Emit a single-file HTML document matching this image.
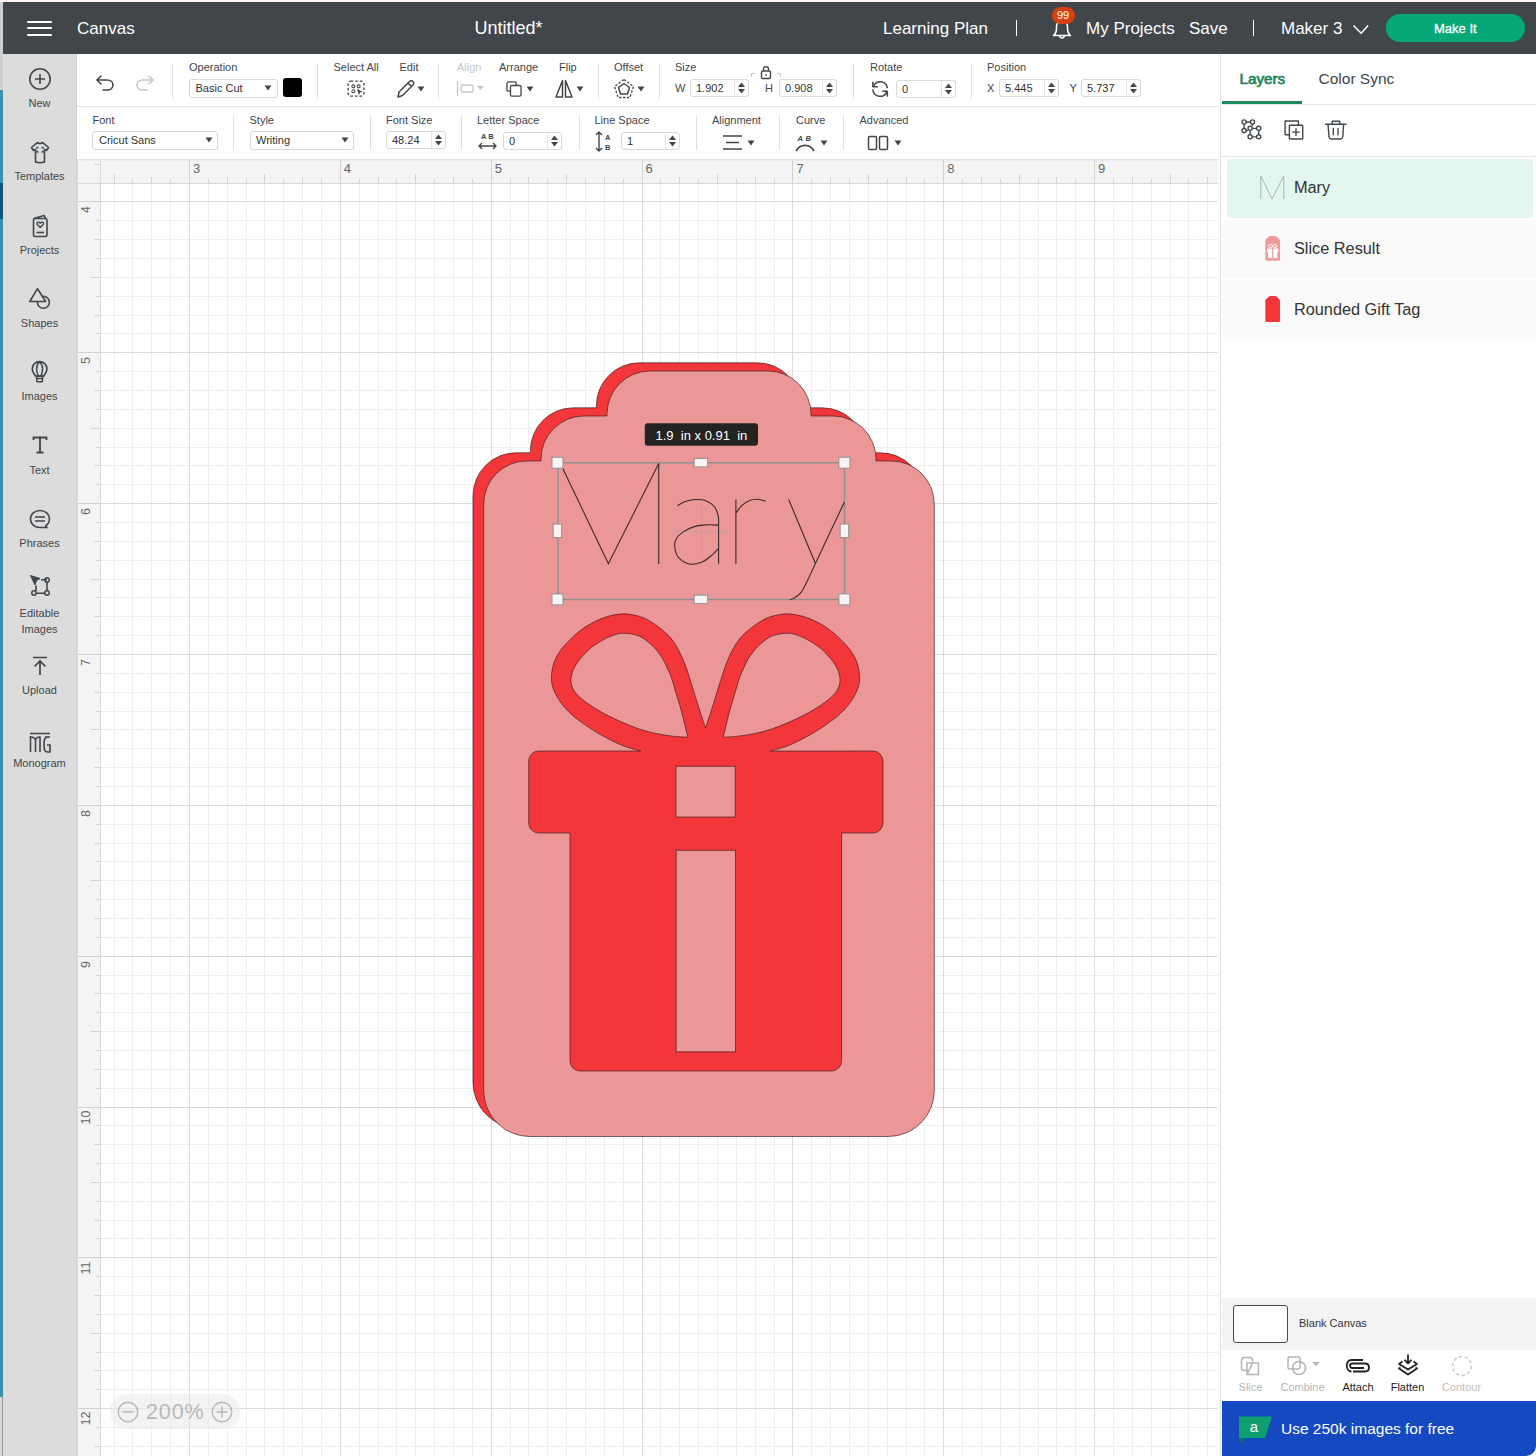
<!DOCTYPE html><html><head><meta charset="utf-8"><style>
html,body{margin:0;padding:0;width:1536px;height:1456px;overflow:hidden;background:#fff;font-family:"Liberation Sans", sans-serif;}
.t{position:absolute;white-space:nowrap;}
.r{position:absolute;display:block;}
</style></head><body>
<div class="r" style="left:0px;top:0px;width:1536px;height:1456px;background:#ffffff"></div>
<div class="r" style="left:0px;top:0px;width:3px;height:1456px;background:#3d8fae"></div>
<div class="r" style="left:0px;top:0px;width:3px;height:90px;background:#cfcfcf"></div>
<div class="r" style="left:0px;top:183px;width:3px;height:36px;background:#0f5273"></div>
<div class="r" style="left:0px;top:1397px;width:3px;height:59px;background:#d8d8d8"></div>
<div class="r" style="left:2px;top:1397px;width:1px;height:59px;background:#9a9a9a"></div>
<div class="r" style="left:0px;top:0px;width:1536px;height:2px;background:#fbf1f1"></div>
<div class="r" style="left:3px;top:2px;width:1533px;height:52px;background:#41464b"></div>
<div class="r" style="left:27px;top:21px;width:25px;height:2px;background:#fff;border-radius:1px"></div>
<div class="r" style="left:27px;top:27px;width:25px;height:2px;background:#fff;border-radius:1px"></div>
<div class="r" style="left:27px;top:34px;width:25px;height:2px;background:#fff;border-radius:1px"></div>
<div class="t" style="left:77.00px;top:19.61px;font-size:17px;line-height:17px;color:#fff;font-weight:normal;">Canvas</div>
<div class="t" style="left:208.50px;width:600px;text-align:center;top:19.06px;font-size:18px;line-height:18px;color:#fff;font-weight:normal;">Untitled*</div>
<div class="t" style="left:883.00px;top:19.61px;font-size:17px;line-height:17px;color:#fff;font-weight:normal;">Learning Plan</div>
<div class="r" style="left:1015.5px;top:20px;width:1.4px;height:16px;background:#fff"></div>
<svg class="r" style="left:1049px;top:14px;" width="26" height="26" viewBox="0 0 26 26"><path d="M4.5 21.5 C6.5 20 7.5 18 7.5 15 V12.5 C7.5 9 10 6.5 13 6.5 C16 6.5 18.5 9 18.5 12.5 V15 C18.5 18 19.5 20 21.5 21.5 Z" fill="none" stroke="#fff" stroke-width="1.5" stroke-linejoin="round"/><path d="M10.8 22 C11 24.5 15 24.5 15.2 22" fill="none" stroke="#fff" stroke-width="1.5"/></svg>
<div class="r" style="left:1052px;top:7px;width:22.5px;height:16.5px;background:#d9400f;border-radius:8.5px"></div>
<div class="t" style="left:763.00px;width:600px;text-align:center;top:9.69px;font-size:11px;line-height:11px;color:#fff;font-weight:normal;">99</div>
<div class="t" style="left:1086.00px;top:19.61px;font-size:17px;line-height:17px;color:#fff;font-weight:normal;">My Projects</div>
<div class="t" style="left:1189.00px;top:19.61px;font-size:17px;line-height:17px;color:#fff;font-weight:normal;">Save</div>
<div class="r" style="left:1253px;top:20px;width:1.4px;height:16px;background:#fff"></div>
<div class="t" style="left:1281.00px;top:19.61px;font-size:17px;line-height:17px;color:#fff;font-weight:normal;">Maker 3</div>
<svg class="r" style="left:1350px;top:20px;" width="22" height="18" viewBox="0 0 22 18"><path d="M3.5 5.5 L11.1 13.2 L18.1 5.5" fill="none" stroke="#fff" stroke-width="1.5"/></svg>
<div class="r" style="left:1386px;top:14px;width:139px;height:28px;background:#06a878;border-radius:14px"></div>
<div class="t" style="left:1155.30px;width:600px;text-align:center;top:21.80px;font-size:13px;line-height:13px;color:#fff;font-weight:normal;-webkit-text-stroke:0.3px #fff;">Make It</div>
<div class="r" style="left:3px;top:54px;width:73px;height:1402px;background:#dcdcdc"></div>
<div class="r" style="left:76px;top:54px;width:1px;height:1402px;background:#d2d2d2"></div>
<svg class="r" style="left:25px;top:64px;" width="30" height="30" viewBox="0 0 30 30"><circle cx="15" cy="15" r="10.2" fill="none" stroke="#41464b" stroke-width="1.6"/><path d="M15 10 V20 M10 15 H20" stroke="#41464b" stroke-width="1.6"/></svg>
<div class="t" style="left:-260.50px;width:600px;text-align:center;top:97.69px;font-size:11px;line-height:11px;color:#41464b;font-weight:normal;">New</div>
<svg class="r" style="left:25px;top:137px;" width="30" height="30" viewBox="0 0 30 30"><path d="M10.5 7 L13 5.5 C14 7 16 7 17 5.5 L19.5 7 L23.5 10.5 L21.5 13.5 L19.5 12.5 L19.5 25 C16.5 26 13.5 26 10.5 25 L10.5 12.5 L8.5 13.5 L6.5 10.5 Z" fill="none" stroke="#41464b" stroke-width="1.6" stroke-linejoin="round"/><path d="M12 12 V10.4 H13.4 M16.6 10.4 H18 V12 M12 13.4 V15 H13.4 M16.6 15 H18 V13.4" fill="none" stroke="#41464b" stroke-width="1.3"/></svg>
<div class="t" style="left:-260.50px;width:600px;text-align:center;top:170.69px;font-size:11px;line-height:11px;color:#41464b;font-weight:normal;">Templates</div>
<svg class="r" style="left:25px;top:211px;" width="30" height="30" viewBox="0 0 30 30"><rect x="8.5" y="7.5" width="13.5" height="18" rx="1.5" fill="none" stroke="#41464b" stroke-width="1.6"/><path d="M9 7.5 L19 4.5 L20.5 7" fill="none" stroke="#41464b" stroke-width="1.6" stroke-linejoin="round"/><path d="M15.2 16.5 L12.3 13.6 C11.3 12.4 12.3 10.8 13.6 11.2 L15.2 12.2 L16.8 11.2 C18.1 10.8 19.1 12.4 18.1 13.6 Z" fill="none" stroke="#41464b" stroke-width="1.4" stroke-linejoin="round"/><path d="M11.5 21.5 H19" stroke="#41464b" stroke-width="1.6"/></svg>
<div class="t" style="left:-260.50px;width:600px;text-align:center;top:244.69px;font-size:11px;line-height:11px;color:#41464b;font-weight:normal;">Projects</div>
<svg class="r" style="left:25px;top:284px;" width="30" height="30" viewBox="0 0 30 30"><circle cx="18.4" cy="18.3" r="6" fill="none" stroke="#41464b" stroke-width="1.6"/><path d="M12.5 4.7 L4.8 17.5 H20.7 Z" fill="#dcdcdc" stroke="#41464b" stroke-width="1.6" stroke-linejoin="round"/></svg>
<div class="t" style="left:-260.50px;width:600px;text-align:center;top:317.69px;font-size:11px;line-height:11px;color:#41464b;font-weight:normal;">Shapes</div>
<svg class="r" style="left:25px;top:357px;" width="30" height="30" viewBox="0 0 30 30"><path d="M10.5 19 L8.3 15.5 C7.6 14.3 7.3 13 7.3 11.8 C7.3 7.7 10.6 4.6 14.6 4.6 C18.6 4.6 21.9 7.7 21.9 11.8 C21.9 13 21.6 14.3 20.9 15.5 L18.7 19 Z" fill="none" stroke="#41464b" stroke-width="1.6" stroke-linejoin="round"/><path d="M14.6 4.8 C12.2 7 11.6 10 11.6 12 C11.6 14.5 12.5 17 13.2 19 M14.6 4.8 C17 7 17.6 10 17.6 12 C17.6 14.5 16.7 17 16 19" fill="none" stroke="#41464b" stroke-width="1.5"/><path d="M11.5 19 H17.7 L17.3 24.8 H11.9 Z M12 21.5 H17.2" fill="none" stroke="#41464b" stroke-width="1.5" stroke-linejoin="round"/></svg>
<div class="t" style="left:-260.50px;width:600px;text-align:center;top:390.69px;font-size:11px;line-height:11px;color:#41464b;font-weight:normal;">Images</div>
<svg class="r" style="left:25px;top:431px;" width="30" height="30" viewBox="0 0 30 30"><path d="M8.5 9 V6.5 H21.5 V9 M15 6.5 V21.5 M11.5 21.5 H18.5" fill="none" stroke="#41464b" stroke-width="1.8"/></svg>
<div class="t" style="left:-260.50px;width:600px;text-align:center;top:464.69px;font-size:11px;line-height:11px;color:#41464b;font-weight:normal;">Text</div>
<svg class="r" style="left:25px;top:504px;" width="30" height="30" viewBox="0 0 30 30"><path d="M22 23.5 L20.6 21.8 C23 20.3 24.5 18 24.5 15 C24.5 10 20.3 6.5 15 6.5 C9.7 6.5 5.5 10 5.5 15 C5.5 20 9.7 23.5 15 23.5 Z" fill="none" stroke="#41464b" stroke-width="1.6" stroke-linejoin="round"/><path d="M10 13 H20 M10 17 H20" stroke="#41464b" stroke-width="1.6"/></svg>
<div class="t" style="left:-260.50px;width:600px;text-align:center;top:537.69px;font-size:11px;line-height:11px;color:#41464b;font-weight:normal;">Phrases</div>
<svg class="r" style="left:25px;top:724px;" width="30" height="30" viewBox="0 0 30 30"><path transform="translate(0,4)" d="M5 5.5 H25 M5.5 8 V24 M5.5 9 C9 9 10.5 10 10.5 13 V24 M10.5 13 C10.5 10 12 9 15 9 V24 M20 9 H25 M24 9 C19.5 9 19 11 19 16.5 C19 22 19.5 24 23 24 L25 24 V17 H22" fill="none" stroke="#41464b" stroke-width="1.6"/></svg>
<div class="t" style="left:-260.50px;width:600px;text-align:center;top:757.69px;font-size:11px;line-height:11px;color:#41464b;font-weight:normal;">Monogram</div>
<svg class="r" style="left:25px;top:651px;" width="30" height="30" viewBox="0 0 30 30"><path d="M8 6.5 H22 M15 10 V24 M9.5 15.5 L15 10 L20.5 15.5" fill="none" stroke="#41464b" stroke-width="1.7"/></svg>
<div class="t" style="left:-260.50px;width:600px;text-align:center;top:684.69px;font-size:11px;line-height:11px;color:#41464b;font-weight:normal;">Upload</div>
<svg class="r" style="left:25px;top:571px;" width="30" height="30" viewBox="0 0 30 30"><path d="M5.5 4.5 L15 7.5 L11.5 9.5 L10 14 Z" fill="#41464b" stroke="#41464b" stroke-width="1" stroke-linejoin="round"/><path d="M11 14.5 V20 M11 22.2 H20 M22 20 V11 M22 8.8 H16" fill="none" stroke="#41464b" stroke-width="1.6"/><circle cx="9" cy="22" r="2.2" fill="none" stroke="#41464b" stroke-width="1.5"/><circle cx="22" cy="22" r="2.2" fill="none" stroke="#41464b" stroke-width="1.5"/><circle cx="22" cy="9" r="2.2" fill="none" stroke="#41464b" stroke-width="1.5"/></svg>
<div class="t" style="left:-260.50px;width:600px;text-align:center;top:607.69px;font-size:11px;line-height:11px;color:#41464b;font-weight:normal;">Editable</div>
<div class="t" style="left:-260.50px;width:600px;text-align:center;top:623.69px;font-size:11px;line-height:11px;color:#41464b;font-weight:normal;">Images</div>
<svg class="r" style="left:77px;top:160px;" width="1141" height="1296" viewBox="0 0 1141 1296"><rect x="37" y="0" width="1" height="1296" fill="#eeeeee"/><rect x="55" y="0" width="1" height="1296" fill="#eeeeee"/><rect x="74" y="0" width="1" height="1296" fill="#eeeeee"/><rect x="93" y="0" width="1" height="1296" fill="#eeeeee"/><rect x="131" y="0" width="1" height="1296" fill="#eeeeee"/><rect x="150" y="0" width="1" height="1296" fill="#eeeeee"/><rect x="169" y="0" width="1" height="1296" fill="#eeeeee"/><rect x="187" y="0" width="1" height="1296" fill="#eeeeee"/><rect x="206" y="0" width="1" height="1296" fill="#eeeeee"/><rect x="225" y="0" width="1" height="1296" fill="#eeeeee"/><rect x="244" y="0" width="1" height="1296" fill="#eeeeee"/><rect x="282" y="0" width="1" height="1296" fill="#eeeeee"/><rect x="301" y="0" width="1" height="1296" fill="#eeeeee"/><rect x="319" y="0" width="1" height="1296" fill="#eeeeee"/><rect x="338" y="0" width="1" height="1296" fill="#eeeeee"/><rect x="357" y="0" width="1" height="1296" fill="#eeeeee"/><rect x="376" y="0" width="1" height="1296" fill="#eeeeee"/><rect x="395" y="0" width="1" height="1296" fill="#eeeeee"/><rect x="433" y="0" width="1" height="1296" fill="#eeeeee"/><rect x="451" y="0" width="1" height="1296" fill="#eeeeee"/><rect x="470" y="0" width="1" height="1296" fill="#eeeeee"/><rect x="489" y="0" width="1" height="1296" fill="#eeeeee"/><rect x="508" y="0" width="1" height="1296" fill="#eeeeee"/><rect x="527" y="0" width="1" height="1296" fill="#eeeeee"/><rect x="546" y="0" width="1" height="1296" fill="#eeeeee"/><rect x="583" y="0" width="1" height="1296" fill="#eeeeee"/><rect x="602" y="0" width="1" height="1296" fill="#eeeeee"/><rect x="621" y="0" width="1" height="1296" fill="#eeeeee"/><rect x="640" y="0" width="1" height="1296" fill="#eeeeee"/><rect x="659" y="0" width="1" height="1296" fill="#eeeeee"/><rect x="678" y="0" width="1" height="1296" fill="#eeeeee"/><rect x="697" y="0" width="1" height="1296" fill="#eeeeee"/><rect x="734" y="0" width="1" height="1296" fill="#eeeeee"/><rect x="753" y="0" width="1" height="1296" fill="#eeeeee"/><rect x="772" y="0" width="1" height="1296" fill="#eeeeee"/><rect x="791" y="0" width="1" height="1296" fill="#eeeeee"/><rect x="810" y="0" width="1" height="1296" fill="#eeeeee"/><rect x="829" y="0" width="1" height="1296" fill="#eeeeee"/><rect x="847" y="0" width="1" height="1296" fill="#eeeeee"/><rect x="885" y="0" width="1" height="1296" fill="#eeeeee"/><rect x="904" y="0" width="1" height="1296" fill="#eeeeee"/><rect x="923" y="0" width="1" height="1296" fill="#eeeeee"/><rect x="942" y="0" width="1" height="1296" fill="#eeeeee"/><rect x="961" y="0" width="1" height="1296" fill="#eeeeee"/><rect x="979" y="0" width="1" height="1296" fill="#eeeeee"/><rect x="998" y="0" width="1" height="1296" fill="#eeeeee"/><rect x="1036" y="0" width="1" height="1296" fill="#eeeeee"/><rect x="1055" y="0" width="1" height="1296" fill="#eeeeee"/><rect x="1074" y="0" width="1" height="1296" fill="#eeeeee"/><rect x="1093" y="0" width="1" height="1296" fill="#eeeeee"/><rect x="1111" y="0" width="1" height="1296" fill="#eeeeee"/><rect x="1130" y="0" width="1" height="1296" fill="#eeeeee"/><rect x="0" y="60" width="1141" height="1" fill="#eeeeee"/><rect x="0" y="79" width="1141" height="1" fill="#eeeeee"/><rect x="0" y="98" width="1141" height="1" fill="#eeeeee"/><rect x="0" y="117" width="1141" height="1" fill="#eeeeee"/><rect x="0" y="136" width="1141" height="1" fill="#eeeeee"/><rect x="0" y="155" width="1141" height="1" fill="#eeeeee"/><rect x="0" y="173" width="1141" height="1" fill="#eeeeee"/><rect x="0" y="211" width="1141" height="1" fill="#eeeeee"/><rect x="0" y="230" width="1141" height="1" fill="#eeeeee"/><rect x="0" y="249" width="1141" height="1" fill="#eeeeee"/><rect x="0" y="268" width="1141" height="1" fill="#eeeeee"/><rect x="0" y="287" width="1141" height="1" fill="#eeeeee"/><rect x="0" y="305" width="1141" height="1" fill="#eeeeee"/><rect x="0" y="324" width="1141" height="1" fill="#eeeeee"/><rect x="0" y="362" width="1141" height="1" fill="#eeeeee"/><rect x="0" y="381" width="1141" height="1" fill="#eeeeee"/><rect x="0" y="400" width="1141" height="1" fill="#eeeeee"/><rect x="0" y="419" width="1141" height="1" fill="#eeeeee"/><rect x="0" y="437" width="1141" height="1" fill="#eeeeee"/><rect x="0" y="456" width="1141" height="1" fill="#eeeeee"/><rect x="0" y="475" width="1141" height="1" fill="#eeeeee"/><rect x="0" y="513" width="1141" height="1" fill="#eeeeee"/><rect x="0" y="532" width="1141" height="1" fill="#eeeeee"/><rect x="0" y="551" width="1141" height="1" fill="#eeeeee"/><rect x="0" y="569" width="1141" height="1" fill="#eeeeee"/><rect x="0" y="588" width="1141" height="1" fill="#eeeeee"/><rect x="0" y="607" width="1141" height="1" fill="#eeeeee"/><rect x="0" y="626" width="1141" height="1" fill="#eeeeee"/><rect x="0" y="664" width="1141" height="1" fill="#eeeeee"/><rect x="0" y="683" width="1141" height="1" fill="#eeeeee"/><rect x="0" y="701" width="1141" height="1" fill="#eeeeee"/><rect x="0" y="720" width="1141" height="1" fill="#eeeeee"/><rect x="0" y="739" width="1141" height="1" fill="#eeeeee"/><rect x="0" y="758" width="1141" height="1" fill="#eeeeee"/><rect x="0" y="777" width="1141" height="1" fill="#eeeeee"/><rect x="0" y="815" width="1141" height="1" fill="#eeeeee"/><rect x="0" y="833" width="1141" height="1" fill="#eeeeee"/><rect x="0" y="852" width="1141" height="1" fill="#eeeeee"/><rect x="0" y="871" width="1141" height="1" fill="#eeeeee"/><rect x="0" y="890" width="1141" height="1" fill="#eeeeee"/><rect x="0" y="909" width="1141" height="1" fill="#eeeeee"/><rect x="0" y="928" width="1141" height="1" fill="#eeeeee"/><rect x="0" y="965" width="1141" height="1" fill="#eeeeee"/><rect x="0" y="984" width="1141" height="1" fill="#eeeeee"/><rect x="0" y="1003" width="1141" height="1" fill="#eeeeee"/><rect x="0" y="1022" width="1141" height="1" fill="#eeeeee"/><rect x="0" y="1041" width="1141" height="1" fill="#eeeeee"/><rect x="0" y="1060" width="1141" height="1" fill="#eeeeee"/><rect x="0" y="1078" width="1141" height="1" fill="#eeeeee"/><rect x="0" y="1116" width="1141" height="1" fill="#eeeeee"/><rect x="0" y="1135" width="1141" height="1" fill="#eeeeee"/><rect x="0" y="1154" width="1141" height="1" fill="#eeeeee"/><rect x="0" y="1173" width="1141" height="1" fill="#eeeeee"/><rect x="0" y="1192" width="1141" height="1" fill="#eeeeee"/><rect x="0" y="1210" width="1141" height="1" fill="#eeeeee"/><rect x="0" y="1229" width="1141" height="1" fill="#eeeeee"/><rect x="0" y="1267" width="1141" height="1" fill="#eeeeee"/><rect x="0" y="1286" width="1141" height="1" fill="#eeeeee"/><rect x="112" y="0" width="1" height="1296" fill="#dcdcdc"/><rect x="263" y="0" width="1" height="1296" fill="#dcdcdc"/><rect x="414" y="0" width="1" height="1296" fill="#dcdcdc"/><rect x="565" y="0" width="1" height="1296" fill="#dcdcdc"/><rect x="715" y="0" width="1" height="1296" fill="#dcdcdc"/><rect x="866" y="0" width="1" height="1296" fill="#dcdcdc"/><rect x="1017" y="0" width="1" height="1296" fill="#dcdcdc"/><rect x="0" y="41" width="1141" height="1" fill="#dcdcdc"/><rect x="0" y="192" width="1141" height="1" fill="#dcdcdc"/><rect x="0" y="343" width="1141" height="1" fill="#dcdcdc"/><rect x="0" y="494" width="1141" height="1" fill="#dcdcdc"/><rect x="0" y="645" width="1141" height="1" fill="#dcdcdc"/><rect x="0" y="796" width="1141" height="1" fill="#dcdcdc"/><rect x="0" y="947" width="1141" height="1" fill="#dcdcdc"/><rect x="0" y="1097" width="1141" height="1" fill="#dcdcdc"/><rect x="0" y="1248" width="1141" height="1" fill="#dcdcdc"/><rect x="0" y="0" width="1141" height="23" fill="#f4f4f4"/><rect x="0" y="0" width="23" height="1296" fill="#f4f4f4"/><rect x="0" y="0" width="1141" height="1" fill="#ececec"/><rect x="0" y="23" width="1141" height="1" fill="#d9d9d9"/><rect x="23" y="0" width="1" height="1296" fill="#d9d9d9"/><rect x="0" y="0" width="1" height="1296" fill="#dedede"/><rect x="37" y="14" width="1" height="9" fill="#d2d2d2"/><rect x="55" y="19" width="1" height="4" fill="#d2d2d2"/><rect x="74" y="17" width="1" height="6" fill="#d2d2d2"/><rect x="93" y="19" width="1" height="4" fill="#d2d2d2"/><rect x="112" y="0" width="1" height="23" fill="#d2d2d2"/><rect x="131" y="19" width="1" height="4" fill="#d2d2d2"/><rect x="150" y="17" width="1" height="6" fill="#d2d2d2"/><rect x="169" y="19" width="1" height="4" fill="#d2d2d2"/><rect x="187" y="14" width="1" height="9" fill="#d2d2d2"/><rect x="206" y="19" width="1" height="4" fill="#d2d2d2"/><rect x="225" y="17" width="1" height="6" fill="#d2d2d2"/><rect x="244" y="19" width="1" height="4" fill="#d2d2d2"/><rect x="263" y="0" width="1" height="23" fill="#d2d2d2"/><rect x="282" y="19" width="1" height="4" fill="#d2d2d2"/><rect x="301" y="17" width="1" height="6" fill="#d2d2d2"/><rect x="319" y="19" width="1" height="4" fill="#d2d2d2"/><rect x="338" y="14" width="1" height="9" fill="#d2d2d2"/><rect x="357" y="19" width="1" height="4" fill="#d2d2d2"/><rect x="376" y="17" width="1" height="6" fill="#d2d2d2"/><rect x="395" y="19" width="1" height="4" fill="#d2d2d2"/><rect x="414" y="0" width="1" height="23" fill="#d2d2d2"/><rect x="433" y="19" width="1" height="4" fill="#d2d2d2"/><rect x="451" y="17" width="1" height="6" fill="#d2d2d2"/><rect x="470" y="19" width="1" height="4" fill="#d2d2d2"/><rect x="489" y="14" width="1" height="9" fill="#d2d2d2"/><rect x="508" y="19" width="1" height="4" fill="#d2d2d2"/><rect x="527" y="17" width="1" height="6" fill="#d2d2d2"/><rect x="546" y="19" width="1" height="4" fill="#d2d2d2"/><rect x="565" y="0" width="1" height="23" fill="#d2d2d2"/><rect x="583" y="19" width="1" height="4" fill="#d2d2d2"/><rect x="602" y="17" width="1" height="6" fill="#d2d2d2"/><rect x="621" y="19" width="1" height="4" fill="#d2d2d2"/><rect x="640" y="14" width="1" height="9" fill="#d2d2d2"/><rect x="659" y="19" width="1" height="4" fill="#d2d2d2"/><rect x="678" y="17" width="1" height="6" fill="#d2d2d2"/><rect x="697" y="19" width="1" height="4" fill="#d2d2d2"/><rect x="715" y="0" width="1" height="23" fill="#d2d2d2"/><rect x="734" y="19" width="1" height="4" fill="#d2d2d2"/><rect x="753" y="17" width="1" height="6" fill="#d2d2d2"/><rect x="772" y="19" width="1" height="4" fill="#d2d2d2"/><rect x="791" y="14" width="1" height="9" fill="#d2d2d2"/><rect x="810" y="19" width="1" height="4" fill="#d2d2d2"/><rect x="829" y="17" width="1" height="6" fill="#d2d2d2"/><rect x="847" y="19" width="1" height="4" fill="#d2d2d2"/><rect x="866" y="0" width="1" height="23" fill="#d2d2d2"/><rect x="885" y="19" width="1" height="4" fill="#d2d2d2"/><rect x="904" y="17" width="1" height="6" fill="#d2d2d2"/><rect x="923" y="19" width="1" height="4" fill="#d2d2d2"/><rect x="942" y="14" width="1" height="9" fill="#d2d2d2"/><rect x="961" y="19" width="1" height="4" fill="#d2d2d2"/><rect x="979" y="17" width="1" height="6" fill="#d2d2d2"/><rect x="998" y="19" width="1" height="4" fill="#d2d2d2"/><rect x="1017" y="0" width="1" height="23" fill="#d2d2d2"/><rect x="1036" y="19" width="1" height="4" fill="#d2d2d2"/><rect x="1055" y="17" width="1" height="6" fill="#d2d2d2"/><rect x="1074" y="19" width="1" height="4" fill="#d2d2d2"/><rect x="1093" y="14" width="1" height="9" fill="#d2d2d2"/><rect x="1111" y="19" width="1" height="4" fill="#d2d2d2"/><rect x="1130" y="17" width="1" height="6" fill="#d2d2d2"/><rect x="17" y="4" width="6" height="1" fill="#d2d2d2"/><rect x="19" y="23" width="4" height="1" fill="#d2d2d2"/><rect x="0" y="41" width="23" height="1" fill="#d2d2d2"/><rect x="19" y="60" width="4" height="1" fill="#d2d2d2"/><rect x="17" y="79" width="6" height="1" fill="#d2d2d2"/><rect x="19" y="98" width="4" height="1" fill="#d2d2d2"/><rect x="14" y="117" width="9" height="1" fill="#d2d2d2"/><rect x="19" y="136" width="4" height="1" fill="#d2d2d2"/><rect x="17" y="155" width="6" height="1" fill="#d2d2d2"/><rect x="19" y="173" width="4" height="1" fill="#d2d2d2"/><rect x="0" y="192" width="23" height="1" fill="#d2d2d2"/><rect x="19" y="211" width="4" height="1" fill="#d2d2d2"/><rect x="17" y="230" width="6" height="1" fill="#d2d2d2"/><rect x="19" y="249" width="4" height="1" fill="#d2d2d2"/><rect x="14" y="268" width="9" height="1" fill="#d2d2d2"/><rect x="19" y="287" width="4" height="1" fill="#d2d2d2"/><rect x="17" y="305" width="6" height="1" fill="#d2d2d2"/><rect x="19" y="324" width="4" height="1" fill="#d2d2d2"/><rect x="0" y="343" width="23" height="1" fill="#d2d2d2"/><rect x="19" y="362" width="4" height="1" fill="#d2d2d2"/><rect x="17" y="381" width="6" height="1" fill="#d2d2d2"/><rect x="19" y="400" width="4" height="1" fill="#d2d2d2"/><rect x="14" y="419" width="9" height="1" fill="#d2d2d2"/><rect x="19" y="437" width="4" height="1" fill="#d2d2d2"/><rect x="17" y="456" width="6" height="1" fill="#d2d2d2"/><rect x="19" y="475" width="4" height="1" fill="#d2d2d2"/><rect x="0" y="494" width="23" height="1" fill="#d2d2d2"/><rect x="19" y="513" width="4" height="1" fill="#d2d2d2"/><rect x="17" y="532" width="6" height="1" fill="#d2d2d2"/><rect x="19" y="551" width="4" height="1" fill="#d2d2d2"/><rect x="14" y="569" width="9" height="1" fill="#d2d2d2"/><rect x="19" y="588" width="4" height="1" fill="#d2d2d2"/><rect x="17" y="607" width="6" height="1" fill="#d2d2d2"/><rect x="19" y="626" width="4" height="1" fill="#d2d2d2"/><rect x="0" y="645" width="23" height="1" fill="#d2d2d2"/><rect x="19" y="664" width="4" height="1" fill="#d2d2d2"/><rect x="17" y="683" width="6" height="1" fill="#d2d2d2"/><rect x="19" y="701" width="4" height="1" fill="#d2d2d2"/><rect x="14" y="720" width="9" height="1" fill="#d2d2d2"/><rect x="19" y="739" width="4" height="1" fill="#d2d2d2"/><rect x="17" y="758" width="6" height="1" fill="#d2d2d2"/><rect x="19" y="777" width="4" height="1" fill="#d2d2d2"/><rect x="0" y="796" width="23" height="1" fill="#d2d2d2"/><rect x="19" y="815" width="4" height="1" fill="#d2d2d2"/><rect x="17" y="833" width="6" height="1" fill="#d2d2d2"/><rect x="19" y="852" width="4" height="1" fill="#d2d2d2"/><rect x="14" y="871" width="9" height="1" fill="#d2d2d2"/><rect x="19" y="890" width="4" height="1" fill="#d2d2d2"/><rect x="17" y="909" width="6" height="1" fill="#d2d2d2"/><rect x="19" y="928" width="4" height="1" fill="#d2d2d2"/><rect x="0" y="947" width="23" height="1" fill="#d2d2d2"/><rect x="19" y="965" width="4" height="1" fill="#d2d2d2"/><rect x="17" y="984" width="6" height="1" fill="#d2d2d2"/><rect x="19" y="1003" width="4" height="1" fill="#d2d2d2"/><rect x="14" y="1022" width="9" height="1" fill="#d2d2d2"/><rect x="19" y="1041" width="4" height="1" fill="#d2d2d2"/><rect x="17" y="1060" width="6" height="1" fill="#d2d2d2"/><rect x="19" y="1078" width="4" height="1" fill="#d2d2d2"/><rect x="0" y="1097" width="23" height="1" fill="#d2d2d2"/><rect x="19" y="1116" width="4" height="1" fill="#d2d2d2"/><rect x="17" y="1135" width="6" height="1" fill="#d2d2d2"/><rect x="19" y="1154" width="4" height="1" fill="#d2d2d2"/><rect x="14" y="1173" width="9" height="1" fill="#d2d2d2"/><rect x="19" y="1192" width="4" height="1" fill="#d2d2d2"/><rect x="17" y="1210" width="6" height="1" fill="#d2d2d2"/><rect x="19" y="1229" width="4" height="1" fill="#d2d2d2"/><rect x="0" y="1248" width="23" height="1" fill="#d2d2d2"/><rect x="19" y="1267" width="4" height="1" fill="#d2d2d2"/><rect x="17" y="1286" width="6" height="1" fill="#d2d2d2"/></svg>
<div class="t" style="left:193.00px;top:162.20px;font-size:13px;line-height:13px;color:#666;font-weight:normal;">3</div>
<div class="t" style="left:343.85px;top:162.20px;font-size:13px;line-height:13px;color:#666;font-weight:normal;">4</div>
<div class="t" style="left:494.70px;top:162.20px;font-size:13px;line-height:13px;color:#666;font-weight:normal;">5</div>
<div class="t" style="left:645.55px;top:162.20px;font-size:13px;line-height:13px;color:#666;font-weight:normal;">6</div>
<div class="t" style="left:796.40px;top:162.20px;font-size:13px;line-height:13px;color:#666;font-weight:normal;">7</div>
<div class="t" style="left:947.25px;top:162.20px;font-size:13px;line-height:13px;color:#666;font-weight:normal;">8</div>
<div class="t" style="left:1098.10px;top:162.20px;font-size:13px;line-height:13px;color:#666;font-weight:normal;">9</div>
<div class="t" style="left:78.5px;top:205.4px;width:14px;height:20px;font-size:12.5px;line-height:14px;color:#666;"><div style="position:absolute;left:0;top:0;transform-origin:0 0;transform:translate(0px,8px) rotate(-90deg);">4</div></div>
<div class="t" style="left:78.5px;top:356.25px;width:14px;height:20px;font-size:12.5px;line-height:14px;color:#666;"><div style="position:absolute;left:0;top:0;transform-origin:0 0;transform:translate(0px,8px) rotate(-90deg);">5</div></div>
<div class="t" style="left:78.5px;top:507.1px;width:14px;height:20px;font-size:12.5px;line-height:14px;color:#666;"><div style="position:absolute;left:0;top:0;transform-origin:0 0;transform:translate(0px,8px) rotate(-90deg);">6</div></div>
<div class="t" style="left:78.5px;top:657.9499999999999px;width:14px;height:20px;font-size:12.5px;line-height:14px;color:#666;"><div style="position:absolute;left:0;top:0;transform-origin:0 0;transform:translate(0px,8px) rotate(-90deg);">7</div></div>
<div class="t" style="left:78.5px;top:808.8px;width:14px;height:20px;font-size:12.5px;line-height:14px;color:#666;"><div style="position:absolute;left:0;top:0;transform-origin:0 0;transform:translate(0px,8px) rotate(-90deg);">8</div></div>
<div class="t" style="left:78.5px;top:959.65px;width:14px;height:20px;font-size:12.5px;line-height:14px;color:#666;"><div style="position:absolute;left:0;top:0;transform-origin:0 0;transform:translate(0px,8px) rotate(-90deg);">9</div></div>
<div class="t" style="left:78.5px;top:1110.5px;width:14px;height:20px;font-size:12.5px;line-height:14px;color:#666;"><div style="position:absolute;left:0;top:0;transform-origin:0 0;transform:translate(0px,13.5px) rotate(-90deg);">10</div></div>
<div class="t" style="left:78.5px;top:1261.3500000000001px;width:14px;height:20px;font-size:12.5px;line-height:14px;color:#666;"><div style="position:absolute;left:0;top:0;transform-origin:0 0;transform:translate(0px,13.5px) rotate(-90deg);">11</div></div>
<div class="t" style="left:78.5px;top:1412.2px;width:14px;height:20px;font-size:12.5px;line-height:14px;color:#666;"><div style="position:absolute;left:0;top:0;transform-origin:0 0;transform:translate(0px,13.5px) rotate(-90deg);">12</div></div>
<div class="r" style="left:1218px;top:160px;width:2px;height:1296px;background:#fff"></div>
<div class="r" style="left:77px;top:54px;width:1143px;height:52px;background:#fff"></div>
<div class="r" style="left:77px;top:106px;width:1141px;height:1px;background:#e3e3e3"></div>
<div class="r" style="left:77px;top:107px;width:1143px;height:52px;background:#fff"></div>
<div class="r" style="left:77px;top:159px;width:1141px;height:1px;background:#e2e2e2"></div>
<svg class="r" style="left:94px;top:72px;" width="24" height="22" viewBox="0 0 24 22"><path d="M7 4 L3 8 L7 12" fill="none" stroke="#41464b" stroke-width="1.6" stroke-linejoin="round" stroke-linecap="round"/><path d="M3.5 8 H13 C16.5 8 19 10 19 13 C19 16 16.5 18 13 18 H9" fill="none" stroke="#41464b" stroke-width="1.6" stroke-linecap="round"/></svg>
<svg class="r" style="left:132px;top:72px;" width="24" height="22" viewBox="0 0 24 22"><path d="M17 4 L21 8 L17 12" fill="none" stroke="#c4c8cb" stroke-width="1.6" stroke-linejoin="round" stroke-linecap="round"/><path d="M20.5 8 H11 C7.5 8 5 10 5 13 C5 16 7.5 18 11 18 H15" fill="none" stroke="#c4c8cb" stroke-width="1.6" stroke-linecap="round"/></svg>
<div class="r" style="left:172px;top:63px;width:1px;height:36px;background:#e0e0e0"></div>
<div class="t" style="left:189.00px;top:62.19px;font-size:11px;line-height:11px;color:#41464b;font-weight:normal;">Operation</div>
<div class="r" style="left:189px;top:79px;width:89px;height:19px;box-sizing:border-box;border:1px solid #d9d9d9;border-radius:3px;background:#fff"></div>
<div class="t" style="left:195.50px;top:82.69px;font-size:11px;line-height:11px;color:#333;font-weight:normal;">Basic Cut</div>
<svg class="r" style="left:264px;top:85px;" width="8" height="6" viewBox="0 0 8 6"><path d="M0.5 0.5 H7.5 L4 5.5 Z" fill="#41464b"/></svg>
<div class="r" style="left:283px;top:78px;width:19px;height:19px;background:#000;border-radius:3px"></div>
<div class="r" style="left:317px;top:63px;width:1px;height:36px;background:#e0e0e0"></div>
<div class="t" style="left:333.50px;top:62.19px;font-size:11px;line-height:11px;color:#41464b;font-weight:normal;">Select All</div>
<svg class="r" style="left:345px;top:78px;" width="22" height="22" viewBox="0 0 22 22"><g transform="translate(11,11) scale(0.88) translate(-11,-11)"><rect x="2" y="2" width="18" height="17" rx="3" fill="none" stroke="#41464b" stroke-width="1.5" stroke-dasharray="3 2.2"/><circle cx="8" cy="8" r="1.7" fill="none" stroke="#41464b" stroke-width="1.2"/><circle cx="14" cy="8" r="1.7" fill="none" stroke="#41464b" stroke-width="1.2"/><circle cx="8" cy="13.5" r="1.7" fill="none" stroke="#41464b" stroke-width="1.2"/><path d="M12 11 L18.5 14 L15.5 15 L14.5 18 Z" fill="#41464b"/></g></svg>
<div class="t" style="left:399.50px;top:62.19px;font-size:11px;line-height:11px;color:#41464b;font-weight:normal;">Edit</div>
<svg class="r" style="left:395px;top:78px;" width="22" height="22" viewBox="0 0 22 22"><path d="M3 19 L4 14 L14.5 3.5 C15.5 2.5 17 2.5 18 3.5 C19 4.5 19 6 18 7 L7.5 17.5 Z M13 5 L16.5 8.5" fill="none" stroke="#41464b" stroke-width="1.5" stroke-linejoin="round"/></svg>
<svg class="r" style="left:417px;top:86px;" width="8" height="6" viewBox="0 0 8 6"><path d="M0.5 0.5 H7.5 L4 5.5 Z" fill="#41464b"/></svg>
<div class="r" style="left:438px;top:63px;width:1px;height:36px;background:#e0e0e0"></div>
<div class="t" style="left:457.00px;top:62.19px;font-size:11px;line-height:11px;color:#c4c6c8;font-weight:normal;">Align</div>
<svg class="r" style="left:456px;top:80px;" width="30" height="18" viewBox="0 0 30 18"><path d="M1.5 1 V16" stroke="#c4c6c8" stroke-width="1.3"/><rect x="5" y="5" width="12" height="7" rx="1.5" fill="none" stroke="#c4c6c8" stroke-width="1.3"/><path d="M21 6 H28 L24.5 10 Z" fill="#c4c6c8"/></svg>
<div class="t" style="left:499.00px;top:62.19px;font-size:11px;line-height:11px;color:#41464b;font-weight:normal;">Arrange</div>
<svg class="r" style="left:504px;top:79px;" width="20" height="20" viewBox="0 0 20 20"><g transform="translate(10,10) scale(0.88) translate(-10,-10)"><path d="M6 12.5 H3.5 C2.7 12.5 2 11.8 2 11 V3.5 C2 2.7 2.7 2 3.5 2 H11 C11.8 2 12.5 2.7 12.5 3.5 V6" fill="none" stroke="#41464b" stroke-width="1.5"/><rect x="6" y="6" width="12" height="12" rx="1.5" fill="none" stroke="#41464b" stroke-width="1.5"/></g></svg>
<svg class="r" style="left:526px;top:86px;" width="8" height="6" viewBox="0 0 8 6"><path d="M0.5 0.5 H7.5 L4 5.5 Z" fill="#41464b"/></svg>
<div class="t" style="left:559.00px;top:62.19px;font-size:11px;line-height:11px;color:#41464b;font-weight:normal;">Flip</div>
<svg class="r" style="left:554px;top:78px;" width="20" height="22" viewBox="0 0 20 22"><path d="M8.5 2.5 L2 19 H8.5 Z M11.5 2.5 L18 19 H11.5 Z" fill="none" stroke="#41464b" stroke-width="1.5" stroke-linejoin="round"/></svg>
<svg class="r" style="left:575.5px;top:86px;" width="8" height="6" viewBox="0 0 8 6"><path d="M0.5 0.5 H7.5 L4 5.5 Z" fill="#41464b"/></svg>
<div class="r" style="left:598px;top:63px;width:1px;height:36px;background:#e0e0e0"></div>
<div class="t" style="left:614.00px;top:62.19px;font-size:11px;line-height:11px;color:#41464b;font-weight:normal;">Offset</div>
<svg class="r" style="left:613px;top:78px;" width="22" height="22" viewBox="0 0 22 22"><path d="M11 1.5 L20.5 8.5 L17 19.5 H5 L1.5 8.5 Z" fill="none" stroke="#41464b" stroke-width="1.3" stroke-dasharray="2.4 1.6" stroke-linejoin="round"/><path d="M11 5.5 L16.5 9.5 L14.5 16 H7.5 L5.5 9.5 Z" fill="none" stroke="#41464b" stroke-width="1.5" stroke-linejoin="round"/></svg>
<svg class="r" style="left:636.5px;top:86px;" width="8" height="6" viewBox="0 0 8 6"><path d="M0.5 0.5 H7.5 L4 5.5 Z" fill="#41464b"/></svg>
<div class="r" style="left:659px;top:63px;width:1px;height:36px;background:#e0e0e0"></div>
<div class="t" style="left:675.00px;top:62.19px;font-size:11px;line-height:11px;color:#41464b;font-weight:normal;">Size</div>
<div class="t" style="left:675.00px;top:82.69px;font-size:11px;line-height:11px;color:#41464b;font-weight:normal;">W</div>
<div class="r" style="left:690px;top:79px;width:59px;height:18px;box-sizing:border-box;border:1px solid #d9d9d9;border-radius:3px;background:#fff"></div>
<div class="r" style="left:734px;top:79px;width:1px;height:18px;background:#e2e2e2"></div>
<svg class="r" style="left:737px;top:79px;" width="9" height="18" viewBox="0 0 9 18"><path d="M1 8 L4.5 3.5 L8 8 Z M1 10 L4.5 14.5 L8 10 Z" fill="#41464b"/></svg>
<div class="t" style="left:696.00px;top:83.19px;font-size:11px;line-height:11px;color:#333;font-weight:normal;">1.902</div>
<svg class="r" style="left:750px;top:64px;" width="32" height="16" viewBox="0 0 32 16"><path d="M1.5 13 V9.5 H5 M27 9.5 H30.5 V13" fill="none" stroke="#c8c8c8" stroke-width="1"/><rect x="11.5" y="7" width="9" height="7.5" rx="1.3" fill="none" stroke="#41464b" stroke-width="1.4"/><path d="M13.5 7 V4.8 C13.5 2 18.5 2 18.5 4.8 V7" fill="none" stroke="#41464b" stroke-width="1.4"/><circle cx="16" cy="10.8" r="0.9" fill="#41464b"/></svg>
<div class="t" style="left:765.00px;top:82.69px;font-size:11px;line-height:11px;color:#41464b;font-weight:normal;">H</div>
<div class="r" style="left:779px;top:79px;width:58px;height:18px;box-sizing:border-box;border:1px solid #d9d9d9;border-radius:3px;background:#fff"></div>
<div class="r" style="left:822px;top:79px;width:1px;height:18px;background:#e2e2e2"></div>
<svg class="r" style="left:825px;top:79px;" width="9" height="18" viewBox="0 0 9 18"><path d="M1 8 L4.5 3.5 L8 8 Z M1 10 L4.5 14.5 L8 10 Z" fill="#41464b"/></svg>
<div class="t" style="left:785.00px;top:83.19px;font-size:11px;line-height:11px;color:#333;font-weight:normal;">0.908</div>
<div class="r" style="left:853px;top:63px;width:1px;height:36px;background:#e0e0e0"></div>
<div class="t" style="left:870.00px;top:62.19px;font-size:11px;line-height:11px;color:#41464b;font-weight:normal;">Rotate</div>
<svg class="r" style="left:870px;top:79px;" width="20" height="20" viewBox="0 0 20 20"><path d="M17.3 8.5 A7.2 7.2 0 0 0 3.8 6.8 M2.9 11 A7.2 7.2 0 0 0 16.5 13.3" fill="none" stroke="#41464b" stroke-width="1.5" stroke-linecap="round"/><path d="M2.9 3.2 V7.8 H7.3 M12.9 12.3 H17.3 V16.9" fill="none" stroke="#41464b" stroke-width="1.6" stroke-linecap="round" stroke-linejoin="round"/></svg>
<div class="r" style="left:896px;top:80px;width:60px;height:18px;box-sizing:border-box;border:1px solid #d9d9d9;border-radius:3px;background:#fff"></div>
<div class="r" style="left:941px;top:80px;width:1px;height:18px;background:#e2e2e2"></div>
<svg class="r" style="left:944px;top:80px;" width="9" height="18" viewBox="0 0 9 18"><path d="M1 8 L4.5 3.5 L8 8 Z M1 10 L4.5 14.5 L8 10 Z" fill="#41464b"/></svg>
<div class="t" style="left:902.00px;top:84.19px;font-size:11px;line-height:11px;color:#333;font-weight:normal;">0</div>
<div class="r" style="left:971px;top:63px;width:1px;height:36px;background:#e0e0e0"></div>
<div class="t" style="left:987.00px;top:62.19px;font-size:11px;line-height:11px;color:#41464b;font-weight:normal;">Position</div>
<div class="t" style="left:987.00px;top:82.69px;font-size:11px;line-height:11px;color:#41464b;font-weight:normal;">X</div>
<div class="r" style="left:999px;top:79px;width:60px;height:18px;box-sizing:border-box;border:1px solid #d9d9d9;border-radius:3px;background:#fff"></div>
<div class="r" style="left:1044px;top:79px;width:1px;height:18px;background:#e2e2e2"></div>
<svg class="r" style="left:1047px;top:79px;" width="9" height="18" viewBox="0 0 9 18"><path d="M1 8 L4.5 3.5 L8 8 Z M1 10 L4.5 14.5 L8 10 Z" fill="#41464b"/></svg>
<div class="t" style="left:1005.00px;top:83.19px;font-size:11px;line-height:11px;color:#333;font-weight:normal;">5.445</div>
<div class="t" style="left:1069.50px;top:82.69px;font-size:11px;line-height:11px;color:#41464b;font-weight:normal;">Y</div>
<div class="r" style="left:1081px;top:79px;width:60px;height:18px;box-sizing:border-box;border:1px solid #d9d9d9;border-radius:3px;background:#fff"></div>
<div class="r" style="left:1126px;top:79px;width:1px;height:18px;background:#e2e2e2"></div>
<svg class="r" style="left:1129px;top:79px;" width="9" height="18" viewBox="0 0 9 18"><path d="M1 8 L4.5 3.5 L8 8 Z M1 10 L4.5 14.5 L8 10 Z" fill="#41464b"/></svg>
<div class="t" style="left:1087.00px;top:83.19px;font-size:11px;line-height:11px;color:#333;font-weight:normal;">5.737</div>
<div class="t" style="left:92.50px;top:114.69px;font-size:11px;line-height:11px;color:#41464b;font-weight:normal;">Font</div>
<div class="r" style="left:92px;top:131px;width:126px;height:19px;box-sizing:border-box;border:1px solid #d9d9d9;border-radius:3px;background:#fff"></div>
<div class="t" style="left:99.00px;top:134.69px;font-size:11px;line-height:11px;color:#333;font-weight:normal;">Cricut Sans</div>
<svg class="r" style="left:204.5px;top:137px;" width="8" height="6" viewBox="0 0 8 6"><path d="M0.5 0.5 H7.5 L4 5.5 Z" fill="#41464b"/></svg>
<div class="r" style="left:233px;top:115px;width:1px;height:35px;background:#e0e0e0"></div>
<div class="t" style="left:249.50px;top:114.69px;font-size:11px;line-height:11px;color:#41464b;font-weight:normal;">Style</div>
<div class="r" style="left:250px;top:131px;width:104px;height:19px;box-sizing:border-box;border:1px solid #d9d9d9;border-radius:3px;background:#fff"></div>
<div class="t" style="left:256.00px;top:134.69px;font-size:11px;line-height:11px;color:#333;font-weight:normal;">Writing</div>
<svg class="r" style="left:341px;top:137px;" width="8" height="6" viewBox="0 0 8 6"><path d="M0.5 0.5 H7.5 L4 5.5 Z" fill="#41464b"/></svg>
<div class="r" style="left:369.5px;top:115px;width:1px;height:35px;background:#e0e0e0"></div>
<div class="t" style="left:386.00px;top:114.69px;font-size:11px;line-height:11px;color:#41464b;font-weight:normal;">Font Size</div>
<div class="r" style="left:386px;top:131px;width:60px;height:18px;box-sizing:border-box;border:1px solid #d9d9d9;border-radius:3px;background:#fff"></div>
<div class="r" style="left:431px;top:131px;width:1px;height:18px;background:#e2e2e2"></div>
<svg class="r" style="left:434px;top:131px;" width="9" height="18" viewBox="0 0 9 18"><path d="M1 8 L4.5 3.5 L8 8 Z M1 10 L4.5 14.5 L8 10 Z" fill="#41464b"/></svg>
<div class="t" style="left:392.00px;top:135.19px;font-size:11px;line-height:11px;color:#333;font-weight:normal;">48.24</div>
<div class="r" style="left:460.5px;top:115px;width:1px;height:35px;background:#e0e0e0"></div>
<div class="t" style="left:477.00px;top:114.69px;font-size:11px;line-height:11px;color:#41464b;font-weight:normal;">Letter Space</div>
<svg class="r" style="left:477px;top:131px;" width="21" height="21" viewBox="0 0 21 21"><text x="4" y="8" font-size="7.5" font-family="Liberation Sans" font-weight="bold" fill="#41464b">A B</text><path d="M2 15 H19 M5 12 L2 15 L5 18 M16 12 L19 15 L16 18" fill="none" stroke="#41464b" stroke-width="1.4" stroke-linejoin="round"/></svg>
<div class="r" style="left:503px;top:132px;width:59px;height:18px;box-sizing:border-box;border:1px solid #d9d9d9;border-radius:3px;background:#fff"></div>
<div class="r" style="left:547px;top:132px;width:1px;height:18px;background:#e2e2e2"></div>
<svg class="r" style="left:550px;top:132px;" width="9" height="18" viewBox="0 0 9 18"><path d="M1 8 L4.5 3.5 L8 8 Z M1 10 L4.5 14.5 L8 10 Z" fill="#41464b"/></svg>
<div class="t" style="left:509.00px;top:136.19px;font-size:11px;line-height:11px;color:#333;font-weight:normal;">0</div>
<div class="r" style="left:578.5px;top:115px;width:1px;height:35px;background:#e0e0e0"></div>
<div class="t" style="left:594.50px;top:114.69px;font-size:11px;line-height:11px;color:#41464b;font-weight:normal;">Line Space</div>
<svg class="r" style="left:594px;top:130px;" width="20" height="23" viewBox="0 0 20 23"><path d="M5 2 V21 M2 5 L5 2 L8 5 M2 18 L5 21 L8 18" fill="none" stroke="#41464b" stroke-width="1.4" stroke-linejoin="round"/><text x="11" y="10" font-size="7.5" font-family="Liberation Sans" font-weight="bold" fill="#41464b">A</text><text x="11" y="19.5" font-size="7.5" font-family="Liberation Sans" font-weight="bold" fill="#41464b">B</text></svg>
<div class="r" style="left:621px;top:132px;width:59px;height:18px;box-sizing:border-box;border:1px solid #d9d9d9;border-radius:3px;background:#fff"></div>
<div class="r" style="left:665px;top:132px;width:1px;height:18px;background:#e2e2e2"></div>
<svg class="r" style="left:668px;top:132px;" width="9" height="18" viewBox="0 0 9 18"><path d="M1 8 L4.5 3.5 L8 8 Z M1 10 L4.5 14.5 L8 10 Z" fill="#41464b"/></svg>
<div class="t" style="left:627.00px;top:136.19px;font-size:11px;line-height:11px;color:#333;font-weight:normal;">1</div>
<div class="r" style="left:695.5px;top:115px;width:1px;height:35px;background:#e0e0e0"></div>
<div class="t" style="left:712.00px;top:114.69px;font-size:11px;line-height:11px;color:#41464b;font-weight:normal;">Alignment</div>
<svg class="r" style="left:722px;top:134px;" width="22" height="18" viewBox="0 0 22 18"><path d="M1 2 H20 M4 8.5 H17 M1 15 H20" stroke="#41464b" stroke-width="1.6"/></svg>
<svg class="r" style="left:746.5px;top:140px;" width="8" height="6" viewBox="0 0 8 6"><path d="M0.5 0.5 H7.5 L4 5.5 Z" fill="#41464b"/></svg>
<div class="r" style="left:778.5px;top:115px;width:1px;height:35px;background:#e0e0e0"></div>
<div class="t" style="left:796.00px;top:114.69px;font-size:11px;line-height:11px;color:#41464b;font-weight:normal;">Curve</div>
<svg class="r" style="left:794px;top:133px;" width="24" height="22" viewBox="0 0 24 22"><text x="3.5" y="8" font-size="7.5" font-family="Liberation Sans" font-weight="bold" font-style="italic" fill="#41464b">A</text><text x="11.5" y="8" font-size="7.5" font-family="Liberation Sans" font-weight="bold" font-style="italic" fill="#41464b">B</text><path d="M2 18 C6 10.5 16 10.5 20 18" fill="none" stroke="#41464b" stroke-width="1.6"/></svg>
<svg class="r" style="left:820px;top:140px;" width="8" height="6" viewBox="0 0 8 6"><path d="M0.5 0.5 H7.5 L4 5.5 Z" fill="#41464b"/></svg>
<div class="r" style="left:843px;top:115px;width:1px;height:35px;background:#e0e0e0"></div>
<div class="t" style="left:859.50px;top:114.69px;font-size:11px;line-height:11px;color:#41464b;font-weight:normal;">Advanced</div>
<svg class="r" style="left:867px;top:135px;" width="24" height="17" viewBox="0 0 24 17"><rect x="1.5" y="1.5" width="8" height="13" rx="1.3" fill="none" stroke="#41464b" stroke-width="1.5"/><rect x="12.5" y="1.5" width="8" height="13" rx="1.3" fill="none" stroke="#41464b" stroke-width="1.5"/></svg>
<svg class="r" style="left:894px;top:140px;" width="8" height="6" viewBox="0 0 8 6"><path d="M0.5 0.5 H7.5 L4 5.5 Z" fill="#41464b"/></svg>
<svg class="r" style="left:0;top:0" width="1536" height="1456" viewBox="0 0 1536 1456"><path d="M473.00 1082.30 V495.80 A43 43 0 0 1 516.00 452.80 H530.30 V450.80 A43 43 0 0 1 573.30 407.80 H596.30 V405.80 A43 43 0 0 1 639.30 362.80 H757.30 A43 43 0 0 1 800.30 405.80 V407.80 H822.30 A43 43 0 0 1 865.30 450.80 V452.80 H880.60 A43 43 0 0 1 923.60 495.80 V1082.30 A46 46 0 0 1 877.60 1128.30 H519.00 A46 46 0 0 1 473.00 1082.30 Z" fill="#f23639" stroke="rgba(50,22,22,0.62)" stroke-width="1"/><path d="M483.70 1090.50 V504.00 A43 43 0 0 1 526.70 461.00 H541.00 V459.00 A43 43 0 0 1 584.00 416.00 H607.00 V414.00 A43 43 0 0 1 650.00 371.00 H768.00 A43 43 0 0 1 811.00 414.00 V416.00 H833.00 A43 43 0 0 1 876.00 459.00 V461.00 H891.30 A43 43 0 0 1 934.30 504.00 V1090.50 A46 46 0 0 1 888.30 1136.50 H529.70 A46 46 0 0 1 483.70 1090.50 Z" fill="#eb9798" stroke="rgba(50,22,22,0.62)" stroke-width="1"/><path d="M538.7 751 L640.7 751 C637.70 750.18 629.21 748.33 622.48 745.56 C615.74 742.80 607.17 738.37 600.34 734.50 C593.52 730.62 587.06 726.38 581.52 722.32 C575.99 718.26 571.19 714.39 567.14 710.15 C563.08 705.90 559.76 701.48 557.17 696.86 C554.59 692.25 552.38 687.46 551.64 682.48 C550.90 677.50 551.64 671.78 552.75 666.98 C553.85 662.19 555.88 657.76 558.28 653.70 C560.68 649.64 563.45 646.51 567.14 642.63 C570.83 638.76 575.81 633.96 580.42 630.46 C585.03 626.95 590.01 624.00 594.81 621.60 C599.60 619.20 604.58 617.36 609.19 616.07 C613.81 614.78 618.42 614.04 622.48 613.85 C626.53 613.67 629.86 614.22 633.54 614.96 C637.23 615.70 640.92 616.62 644.61 618.28 C648.30 619.94 651.99 622.34 655.68 624.92 C659.37 627.51 663.43 630.46 666.75 633.78 C670.07 637.10 672.84 640.42 675.60 644.85 C678.37 649.27 681.14 655.18 683.35 660.34 C685.56 665.51 687.04 670.30 688.88 675.84 C690.73 681.37 692.57 687.64 694.42 693.54 C696.26 699.45 698.11 705.53 699.95 711.25 C701.80 716.97 704.56 725.09 705.49 727.86 L705.51 727.86 C706.44 725.09 709.20 716.97 711.05 711.25 C712.89 705.53 714.74 699.45 716.58 693.54 C718.43 687.64 720.27 681.37 722.12 675.84 C723.96 670.30 725.44 665.51 727.65 660.34 C729.86 655.18 732.63 649.27 735.40 644.85 C738.16 640.42 740.93 637.10 744.25 633.78 C747.57 630.46 751.63 627.51 755.32 624.92 C759.01 622.34 762.70 619.94 766.39 618.28 C770.08 616.62 773.77 615.70 777.46 614.96 C781.14 614.22 784.47 613.67 788.52 613.85 C792.58 614.04 797.19 614.78 801.81 616.07 C806.42 617.36 811.40 619.20 816.19 621.60 C820.99 624.00 825.97 626.95 830.58 630.46 C835.19 633.96 840.17 638.76 843.86 642.63 C847.55 646.51 850.32 649.64 852.72 653.70 C855.12 657.76 857.15 662.19 858.25 666.98 C859.36 671.78 860.10 677.50 859.36 682.48 C858.62 687.46 856.41 692.25 853.83 696.86 C851.24 701.48 847.92 705.90 843.86 710.15 C839.81 714.39 835.01 718.26 829.48 722.32 C823.94 726.38 817.48 730.62 810.66 734.50 C803.83 738.37 795.26 742.80 788.52 745.56 C781.79 748.33 773.30 750.18 770.26 751.10 L873 751 A10 10 0 0 1 883 761 L883 823 A10 10 0 0 1 873 833 L841.6 833 L841.6 1061 A10 10 0 0 1 831.6 1071 L580 1071 A10 10 0 0 1 570 1061 L570 833 L538.7 833 A10 10 0 0 1 528.7 823 L528.7 761 A10 10 0 0 1 538.7 751 Z" fill="#f23639" stroke="rgba(50,22,22,0.62)" stroke-width="1"/><path d="M687.78 737.26 C685.20 737.08 677.63 736.80 672.28 736.16 C666.93 735.51 661.21 734.59 655.68 733.39 C650.15 732.19 644.61 730.81 639.08 728.96 C633.54 727.12 628.01 724.72 622.48 722.32 C616.94 719.92 611.41 717.53 605.87 714.57 C600.34 711.62 593.88 707.75 589.27 704.61 C584.66 701.48 580.97 698.53 578.20 695.76 C575.44 692.99 573.87 690.59 572.67 688.01 C571.47 685.43 571.01 683.03 571.01 680.26 C571.01 677.50 571.47 674.54 572.67 671.41 C573.87 668.27 575.44 665.14 578.20 661.45 C580.97 657.76 585.58 652.59 589.27 649.27 C592.96 645.95 596.65 643.74 600.34 641.52 C604.03 639.31 607.53 637.37 611.41 635.99 C615.28 634.61 618.97 633.22 623.58 633.22 C628.19 633.22 634.65 634.24 639.08 635.99 C643.51 637.74 647.38 641.52 650.15 643.74 C652.91 645.95 653.65 646.87 655.68 649.27 C657.71 651.67 660.48 655.18 662.32 658.13 C664.17 661.08 665.27 663.85 666.75 666.98 C668.22 670.12 669.88 673.44 671.18 676.94 C672.47 680.45 673.39 684.32 674.50 688.01 C675.60 691.70 676.71 695.39 677.82 699.08 C678.92 702.77 680.03 706.09 681.14 710.15 C682.24 714.20 683.35 718.91 684.46 723.43 C685.56 727.95 687.22 734.96 687.78 737.26 Z" fill="#eb9798" stroke="rgba(50,22,22,0.62)" stroke-width="1"/><path d="M723.22 737.26 C725.80 737.08 733.37 736.80 738.72 736.16 C744.07 735.51 749.79 734.59 755.32 733.39 C760.85 732.19 766.39 730.81 771.92 728.96 C777.46 727.12 782.99 724.72 788.52 722.32 C794.06 719.92 799.59 717.53 805.13 714.57 C810.66 711.62 817.12 707.75 821.73 704.61 C826.34 701.48 830.03 698.53 832.80 695.76 C835.56 692.99 837.13 690.59 838.33 688.01 C839.53 685.43 839.99 683.03 839.99 680.26 C839.99 677.50 839.53 674.54 838.33 671.41 C837.13 668.27 835.56 665.14 832.80 661.45 C830.03 657.76 825.42 652.59 821.73 649.27 C818.04 645.95 814.35 643.74 810.66 641.52 C806.97 639.31 803.47 637.37 799.59 635.99 C795.72 634.61 792.03 633.22 787.42 633.22 C782.81 633.22 776.35 634.24 771.92 635.99 C767.49 637.74 763.62 641.52 760.85 643.74 C758.09 645.95 757.35 646.87 755.32 649.27 C753.29 651.67 750.52 655.18 748.68 658.13 C746.83 661.08 745.73 663.85 744.25 666.98 C742.78 670.12 741.12 673.44 739.82 676.94 C738.53 680.45 737.61 684.32 736.50 688.01 C735.40 691.70 734.29 695.39 733.18 699.08 C732.08 702.77 730.97 706.09 729.86 710.15 C728.76 714.20 727.65 718.91 726.54 723.43 C725.44 727.95 723.78 734.96 723.22 737.26 Z" fill="#eb9798" stroke="rgba(50,22,22,0.62)" stroke-width="1"/><rect x="676" y="766.3" width="59.2" height="50.7" fill="#eb9798" stroke="rgba(50,22,22,0.62)" stroke-width="1"/><rect x="676.2" y="850.3" width="59.3" height="201.5" fill="#eb9798" stroke="rgba(50,22,22,0.62)" stroke-width="1"/><rect x="558" y="462.8" width="286.5" height="136.7" fill="none" stroke="#8f8f8f" stroke-width="1.4"/><path d="M675 531.5 H727.6 M701.5 505 V557" stroke="#b3a0a0" stroke-width="0.8"/><path d="M560.4 463.5 L608.4 563.7 L658.7 463.5 L658.7 564 M677.4 505.7 C678.83 504.97 682.92 502.33 686.00 501.30 C689.08 500.27 692.60 499.60 695.90 499.50 C699.20 499.40 702.70 499.47 705.80 500.70 C708.90 501.93 712.43 504.42 714.50 506.90 C716.57 509.38 717.52 512.72 718.20 515.60 C718.88 518.48 718.53 522.77 718.60 524.20 L718.6 563.8 M718.6 525.2 C716.88 525.13 712.08 524.65 708.30 524.80 C704.52 524.95 700.02 524.97 695.90 526.10 C691.78 527.23 686.90 529.43 683.60 531.60 C680.30 533.77 677.55 536.42 676.10 539.10 C674.65 541.78 674.48 544.62 674.90 547.70 C675.32 550.78 676.13 554.88 678.60 557.60 C681.07 560.32 685.78 563.27 689.70 564.00 C693.62 564.73 698.38 563.48 702.10 562.00 C705.82 560.52 709.25 557.38 712.00 555.10 C714.75 552.82 717.50 549.43 718.60 548.30 M735.9 499.5 L735.9 564 M735.9 513.1 C736.87 511.87 739.50 507.77 741.70 505.70 C743.90 503.63 746.42 501.78 749.10 500.70 C751.78 499.62 755.02 499.10 757.80 499.20 C760.58 499.30 764.47 500.95 765.80 501.30 M788.7 499.5 L815.3 563.2 M844.4 502 C839.55 512.30 821.48 550.62 815.30 563.80 C809.12 576.98 809.67 576.35 807.30 581.10 C804.93 585.85 803.37 589.42 801.10 592.30 C798.83 595.18 795.57 597.17 793.70 598.40 C791.83 599.63 790.53 599.48 789.90 599.70" fill="none" stroke="#3b2a2a" stroke-width="1.1"/><rect x="552.00" y="457.20" width="11" height="11" fill="#f8f4f4" stroke="#929292" stroke-width="1"/><rect x="838.90" y="457.20" width="11" height="11" fill="#f8f4f4" stroke="#929292" stroke-width="1"/><rect x="552.00" y="593.90" width="11" height="11" fill="#f8f4f4" stroke="#929292" stroke-width="1"/><rect x="838.90" y="593.90" width="11" height="11" fill="#f8f4f4" stroke="#929292" stroke-width="1"/><rect x="694.15" y="458.45" width="13.5" height="8.5" fill="#f8f4f4" stroke="#929292" stroke-width="1"/><rect x="694.15" y="595.15" width="13.5" height="8.5" fill="#f8f4f4" stroke="#929292" stroke-width="1"/><rect x="553.15" y="524.05" width="8.5" height="13.5" fill="#f8f4f4" stroke="#929292" stroke-width="1"/><rect x="840.15" y="524.05" width="8.5" height="13.5" fill="#f8f4f4" stroke="#929292" stroke-width="1"/><rect x="644.8" y="423.3" width="113.2" height="22.5" rx="3" fill="#232323"/></svg>
<div class="t" style="left:401.40px;width:600px;text-align:center;top:429.00px;font-size:13px;line-height:13px;color:#fff;font-weight:normal;">1.9&nbsp; in x 0.91&nbsp; in</div>
<div class="r" style="left:1220px;top:54px;width:316px;height:1402px;background:#fff"></div>
<div class="r" style="left:1220px;top:54px;width:1px;height:1402px;background:#e2e2e2"></div>
<div class="t" style="left:1239.50px;top:71.03px;font-size:15.2px;line-height:15.2px;color:#1d8560;font-weight:normal;-webkit-text-stroke:0.7px #1d8560;">Layers</div>
<div class="t" style="left:1318.50px;top:71.38px;font-size:15.5px;line-height:15.5px;color:#41464b;font-weight:normal;">Color Sync</div>
<div class="r" style="left:1222px;top:101px;width:80px;height:3px;background:#1f8a5e"></div>
<div class="r" style="left:1222px;top:104px;width:314px;height:1px;background:#e6e6e6"></div>
<svg class="r" style="left:1239px;top:117px;" width="24" height="24" viewBox="0 0 24 24"><g fill="none" stroke="#41464b" stroke-width="1.35"><path d="M5.1 5 H13.5 V9 M5.1 5 V13.6 H8.9 M11.1 11.3 H19.7 V19.8 H11.1 Z"/><g fill="#fff"><circle cx="5.1" cy="5" r="2.1"/><circle cx="13.5" cy="5" r="2.1"/><circle cx="5.1" cy="13.6" r="2.1"/><circle cx="11.1" cy="11.3" r="2.1"/><circle cx="19.7" cy="11.3" r="2.1"/><circle cx="11.1" cy="19.8" r="2.1"/><circle cx="19.7" cy="19.8" r="2.1"/></g></g></svg>
<svg class="r" style="left:1282px;top:118px;" width="24" height="24" viewBox="0 0 24 24"><g fill="none" stroke="#41464b" stroke-width="1.4" stroke-linejoin="round"><path d="M7.4 16.7 H3.1 V3 H16.4 V7.3"/><rect x="7.4" y="7.3" width="13.3" height="13.7" rx="0.6"/><path d="M14 10.3 V17.9 M10.2 14.1 H17.8"/></g></svg>
<svg class="r" style="left:1324px;top:117px;" width="24" height="24" viewBox="0 0 24 24"><g fill="none" stroke="#41464b" stroke-width="1.4" stroke-linejoin="round" stroke-linecap="round"><path d="M1.6 7.3 H22 M8.2 7.3 V4.2 H15.7 V7.3 M4 7.3 L5 19.5 C5.2 21 6 22 7.5 22 H16.3 C17.8 22 18.6 21 18.8 19.5 L19.6 7.3 M9.3 11.4 V17.7 M14 11.4 V17.7"/></g></svg>
<div class="r" style="left:1222px;top:156px;width:314px;height:1px;background:#e6e6e6"></div>
<div class="r" style="left:1227px;top:159px;width:306px;height:59px;background:#e3f6ef;border-radius:4px"></div>
<div class="r" style="left:1222px;top:218px;width:314px;height:122px;background:#fafafa"></div>
<svg class="r" style="left:1259px;top:174px;" width="28" height="27" viewBox="0 0 28 27"><path d="M1.8 25 V1.8 L13 25 L24.8 1.8 V25" fill="none" stroke="#a2b0aa" stroke-width="0.9"/></svg>
<div class="r" style="left:1222px;top:218px;width:314px;height:1.5px;background:#fff"></div>
<div class="r" style="left:1222px;top:278px;width:314px;height:1.5px;background:#fff"></div>
<div class="t" style="left:1294.00px;top:178.70px;font-size:16.3px;line-height:16.3px;color:#333;font-weight:normal;">Mary</div>
<svg class="r" style="left:1264px;top:234px;" width="18" height="28" viewBox="0 0 18 28"><path d="M1.3 6.5 C1.3 5.5 5 1.9 6.3 1.9 H11 C12.3 1.9 16 5.5 16 6.5 V25.6 C16 26.3 15.5 26.8 14.8 26.8 H2.5 C1.8 26.8 1.3 26.3 1.3 25.6 Z" fill="#f09a9a"/><g fill="none" stroke="#fff" stroke-width="1"><ellipse cx="6.6" cy="12" rx="1.9" ry="1.5"/><ellipse cx="10.8" cy="12" rx="1.9" ry="1.5"/></g><path d="M3 14.6 H8.1 V18 H3 Z M9.3 14.6 H14.3 V18 H9.3 Z M4 18 H8.1 V24 H4 Z M9.3 18 H13.3 V24 H9.3 Z" fill="#fff"/></svg>
<div class="t" style="left:1294.00px;top:240.20px;font-size:16.3px;line-height:16.3px;color:#333;font-weight:normal;">Slice Result</div>
<svg class="r" style="left:1264px;top:294px;" width="18" height="30" viewBox="0 0 18 30"><path d="M1.3 6.5 C1.3 5.5 5 2 6.3 2 H11 C12.3 2 16 5.5 16 6.5 V26.8 C16 27.5 15.5 28 14.8 28 H2.5 C1.8 28 1.3 27.5 1.3 26.8 Z" fill="#f23639"/></svg>
<div class="t" style="left:1294.00px;top:300.70px;font-size:16.3px;line-height:16.3px;color:#333;font-weight:normal;">Rounded Gift Tag</div>
<div class="r" style="left:1222px;top:1298px;width:314px;height:52px;background:#f3f3f3"></div>
<div class="r" style="left:1233px;top:1305px;width:55px;height:38px;box-sizing:border-box;border:1px solid #4a4a4a;border-radius:3px;background:#fff"></div>
<div class="t" style="left:1299.00px;top:1318.19px;font-size:11px;line-height:11px;color:#333;font-weight:normal;">Blank Canvas</div>
<svg class="r" style="left:1238px;top:1354px;" width="24" height="24" viewBox="0 0 24 24"><g fill="none" stroke="#b5b5b5" stroke-width="1.5"><path d="M10 16.5 H6 C4.6 16.5 3.5 15.4 3.5 14 V6 C3.5 4.6 4.6 3.5 6 3.5 H12 C13.4 3.5 14.5 4.6 14.5 6 V8"/><path d="M9 9 H20.5 V20.5 H9 Z"/><path d="M9 20.5 L14.5 9"/></g></svg>
<div class="t" style="left:950.50px;width:600px;text-align:center;top:1382.19px;font-size:11px;line-height:11px;color:#b5b5b5;font-weight:normal;">Slice</div>
<svg class="r" style="left:1285px;top:1354px;" width="40" height="24" viewBox="0 0 40 24"><g fill="none" stroke="#b5b5b5" stroke-width="1.5"><rect x="3" y="3" width="12" height="12" rx="1.5"/><circle cx="14" cy="14" r="6.5"/></g><path d="M27 8 H35 L31 12 Z" fill="#b5b5b5"/></svg>
<div class="t" style="left:1002.50px;width:600px;text-align:center;top:1382.19px;font-size:11px;line-height:11px;color:#b5b5b5;font-weight:normal;">Combine</div>
<svg class="r" style="left:1345px;top:1356px;" width="26" height="20" viewBox="0 0 26 20"><path d="M8 15.5 H20 C22.5 15.5 24 13.7 24 11.5 C24 9.3 22.5 7.5 20 7.5 H7.5 C6 7.5 5 8.5 5 9.8 C5 11.1 6 12 7.5 12 H19 M18 4 H6.5 C3.5 4 1.8 6.5 1.8 9.5 C1.8 12.5 3.5 15.5 6.5 15.5" fill="none" stroke="#222" stroke-width="1.8"/></svg>
<div class="t" style="left:1058.00px;width:600px;text-align:center;top:1382.19px;font-size:11px;line-height:11px;color:#222;font-weight:normal;">Attach</div>
<svg class="r" style="left:1396px;top:1353px;" width="24" height="24" viewBox="0 0 24 24"><g fill="none" stroke="#222" stroke-width="1.8" stroke-linejoin="round"><path d="M12 1.5 V10 M8.5 6.8 L12 10.3 L15.5 6.8"/><path d="M6.5 8.5 L3 11 L12 16.5 L21 11 L17.5 8.5"/><path d="M4.5 14.5 L3 15.5 L12 21.5 L21 15.5 L19.5 14.5"/></g></svg>
<div class="t" style="left:1107.50px;width:600px;text-align:center;top:1382.19px;font-size:11px;line-height:11px;color:#222;font-weight:normal;">Flatten</div>
<svg class="r" style="left:1449px;top:1354px;" width="26" height="26" viewBox="0 0 26 26"><circle cx="13" cy="12" r="9.5" fill="none" stroke="#c9c9c9" stroke-width="1.5" stroke-dasharray="3.3 2.6"/></svg>
<div class="t" style="left:1161.50px;width:600px;text-align:center;top:1382.19px;font-size:11px;line-height:11px;color:#c0c0c0;font-weight:normal;">Contour</div>
<div class="r" style="left:1222px;top:1401px;width:314px;height:55px;background:#1449c2;border-bottom-right-radius:10px"></div>
<svg class="r" style="left:1237px;top:1415px;" width="38" height="30" viewBox="0 0 38 30"><path d="M2 1.5 H35 L28 23 H8 L4 28 V23 H2 Z" fill="#0f9e6e"/><path d="M2.5 23 H8 L4 28 Z" fill="#0a7a52"/><text x="17" y="17" font-size="15" font-family="Liberation Sans" fill="#fff" text-anchor="middle">a</text></svg>
<div class="t" style="left:1281.00px;top:1421.38px;font-size:15.5px;line-height:15.5px;color:#fff;font-weight:normal;">Use 250k images for free</div>
<div class="r" style="left:110px;top:1394px;width:130px;height:35px;background:rgba(232,232,232,0.5);border-radius:17px"></div>
<svg class="r" style="left:116px;top:1400px;" width="24" height="24" viewBox="0 0 24 24"><circle cx="12" cy="12" r="9.8" fill="none" stroke="rgba(140,145,148,0.6)" stroke-width="1.4"/><path d="M6.5 11.8 H17.5" stroke="rgba(140,145,148,0.6)" stroke-width="1.5"/></svg>
<div class="t" style="left:146.00px;top:1401.80px;font-size:21.5px;line-height:21.5px;color:rgba(140,145,148,0.6);font-weight:normal;letter-spacing:0.9px;">200%</div>
<svg class="r" style="left:210px;top:1400px;" width="24" height="24" viewBox="0 0 24 24"><circle cx="12" cy="12" r="9.8" fill="none" stroke="rgba(140,145,148,0.6)" stroke-width="1.4"/><path d="M6.5 12 H17.5 M12 6.5 V17.5" stroke="rgba(140,145,148,0.6)" stroke-width="1.5"/></svg>
</body></html>
